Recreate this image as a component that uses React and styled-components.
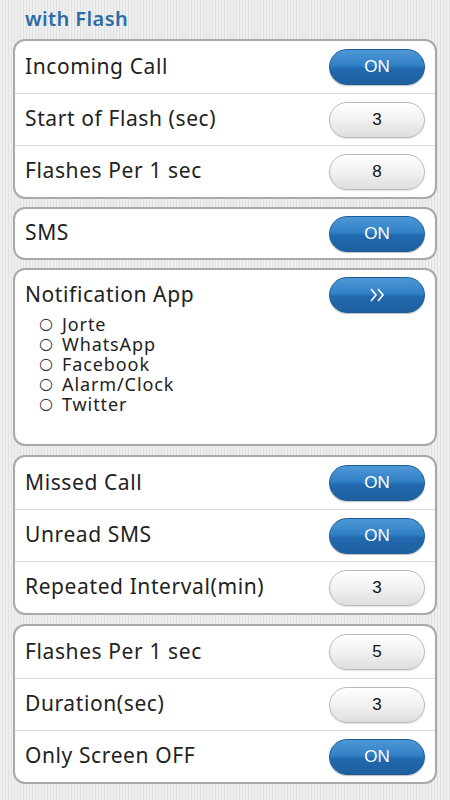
import React from "react";
import styled, { createGlobalStyle } from "styled-components";

const GlobalStyle = createGlobalStyle`
  html, body {
    margin: 0;
    padding: 0;
  }
  body {
    background: repeating-linear-gradient(90deg, #efefef 0 2px, #e1e1e1 2px 3px);
    font-family: "Noto Sans", "Open Sans", sans-serif;
  }
`;

const Page = styled.div`
  width: 450px;
  min-height: 800px;
  box-sizing: border-box;
  padding: 0 13px 0 13px;
`;

const Title = styled.div`
  height: 39px;
  line-height: 38px;
  padding-left: 12px;
  font-size: 20px;
  font-weight: 600;
  letter-spacing: 0.4px;
  color: #2c6ca6;
`;

const Card = styled.div`
  background: #fff;
  border: 2px solid #a9a9a9;
  border-radius: 12px;
  margin-bottom: ${(p) => p.$gap || 8}px;
  box-shadow: inset 0 0 1px rgba(0, 0, 0, 0.15);
  overflow: hidden;
`;

const Row = styled.div`
  display: flex;
  align-items: center;
  justify-content: space-between;
  box-sizing: border-box;
  height: ${(p) => p.$h || 52}px;
  padding: 0 10px 0 10px;
  & + & {
    border-top: 1px solid #dcdcdc;
  }
`;

const Label = styled.span`
  font-size: 21px;
  line-height: 26px;
  color: #222;
  letter-spacing: 0.6px;
  margin-top: -3px;
`;

const Pill = styled.button`
  width: 96px;
  height: 36px;
  border-radius: 18px;
  flex-shrink: 0;
  display: flex;
  align-items: center;
  justify-content: center;
  font-family: "Liberation Sans", Arial, sans-serif;
  font-size: 17px;
  padding: 0;
  cursor: pointer;
  border: 1px solid ${(p) => (p.$on ? "#1c5b97" : "#b9b9b9")};
  color: ${(p) => (p.$on ? "#fff" : "#111")};
  background: ${(p) =>
    p.$on
      ? "linear-gradient(#4d97d6, #3281c6 45%, #2169ae 55%, #1e609f)"
      : "linear-gradient(#ffffff, #f1f1f1 50%, #dedede)"};
  box-shadow: ${(p) =>
    p.$on ? "0 1px 1px rgba(0,0,0,0.25)" : "0 1px 1px rgba(0,0,0,0.12)"};
`;

const AppBlock = styled.div`
  box-sizing: border-box;
  height: 174px;
  padding: 7px 10px 0 10px;
`;

const AppHead = styled.div`
  display: flex;
  align-items: center;
  justify-content: space-between;
  margin-bottom: 1px;
`;

const AppList = styled.ul`
  list-style: none;
  margin: 0;
  padding: 0 0 0 14px;
`;

const AppItem = styled.li`
  display: flex;
  align-items: center;
  height: 20px;
  line-height: 20px;
  font-size: 18px;
  color: #222;
  letter-spacing: 0.9px;
`;

const Radio = styled.span`
  font-family: "DejaVu Sans", sans-serif;
  font-size: 16px;
  line-height: 20px;
  width: 23px;
  color: #333;
`;

const Chevrons = () => (
  <svg width="20" height="16" viewBox="0 0 20 16">
    <polyline points="4,2 9,8 4,14" fill="none" stroke="#fff" strokeWidth="1.6" />
    <polyline points="11,2 16,8 11,14" fill="none" stroke="#fff" strokeWidth="1.6" />
  </svg>
);

const Setting = ({ label, value, on, h }) => (
  <Row $h={h}>
    <Label>{label}</Label>
    <Pill $on={on}>{on ? "ON" : value}</Pill>
  </Row>
);

const apps = ["Jorte", "WhatsApp", "Facebook", "Alarm/Clock", "Twitter"];

export default function App() {
  return (
    <Page>
      <GlobalStyle />
      <Title>with Flash</Title>
      <Card>
        <Setting label="Incoming Call" on />
        <Setting label="Start of Flash (sec)" value="3" />
        <Setting label="Flashes Per 1 sec" value="8" />
      </Card>
      <Card>
        <Setting label="SMS" on h={49} />
      </Card>
      <Card $gap={9}>
        <AppBlock>
          <AppHead>
            <Label>Notification App</Label>
            <Pill $on>
              <Chevrons />
            </Pill>
          </AppHead>
          <AppList>
            {apps.map((a) => (
              <AppItem key={a}>
                <Radio>○</Radio>
                {a}
              </AppItem>
            ))}
          </AppList>
        </AppBlock>
      </Card>
      <Card $gap={9}>
        <Setting label="Missed Call" on />
        <Setting label="Unread SMS" on />
        <Setting label="Repeated Interval(min)" value="3" />
      </Card>
      <Card>
        <Setting label="Flashes Per 1 sec" value="5" />
        <Setting label="Duration(sec)" value="3" />
        <Setting label="Only Screen OFF" on />
      </Card>
    </Page>
  );
}
